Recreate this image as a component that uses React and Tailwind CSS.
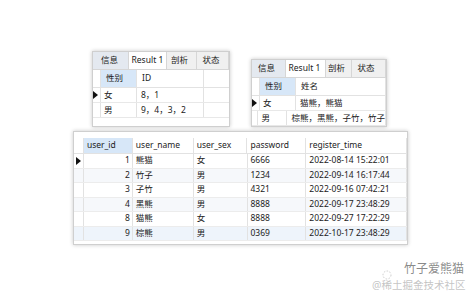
const FONT = { fontFamily: '"Noto Sans", "Noto Sans CJK SC", sans-serif' };

function Arrow() {
  return (
    <svg width="5" height="8" viewBox="0 0 5 8" className="block">
      <path d="M0 0 L5 4 L0 8 Z" fill="#111" />
    </svg>
  );
}

function Tabs({ tabs }) {
  return (
    <div className="flex h-[18px] bg-[#f0f0f0] border-b border-[#d6d6d6] shrink-0">
      {tabs.map((t) => (
        <div
          key={t.label}
          className={`flex items-center border-r border-[#d6d6d6] ${t.w} ${t.pl} ${
            t.active ? 'bg-white' : t.dark ? 'bg-[#e4e9f0]' : 'bg-[#f0f0f0]'
          }`}
        >
          {t.label}
        </div>
      ))}
    </div>
  );
}

function SmallGrid({ cols, header, rows, rowH, headH }) {
  return (
    <div className="flex flex-col">
      <div className={`flex ${headH} border-b border-[#e2e2e2]`}>
        <div className={`${cols[0]} border-r border-[#e2e2e2]`} />
        <div className={`${cols[1]} bg-[#d7e7f8] border-r border-[#e2e2e2] flex items-center pl-[5px]`}>{header[0]}</div>
        <div className={`${cols[2]} border-r border-[#e2e2e2] flex items-center pl-[5px]`}>{header[1]}</div>
      </div>
      {rows.map((r, i) => (
        <div key={i} className={`flex ${rowH} border-b border-[#e8e8e8]`}>
          <div className={`${cols[0]} border-r border-[#e2e2e2] flex items-center`}>{i === 0 && <Arrow />}</div>
          <div className={`${cols[1]} border-r border-[#e2e2e2] flex items-center pl-[3px]`}>{r[0]}</div>
          <div className={`${cols[2]} border-r border-[#e2e2e2] flex items-center pl-[4px] whitespace-nowrap`}>{r[1]}</div>
        </div>
      ))}
    </div>
  );
}

const USERS = [
  ['1', '熊猫', '女', '6666', '2022-08-14 15:22:01'],
  ['2', '竹子', '男', '1234', '2022-09-14 16:17:44'],
  ['3', '子竹', '男', '4321', '2022-09-16 07:42:21'],
  ['4', '黑熊', '男', '8888', '2022-09-17 23:48:29'],
  ['8', '猫熊', '女', '8888', '2022-09-27 17:22:29'],
  ['9', '棕熊', '男', '0369', '2022-10-17 23:48:29'],
];

const BIG_COLS = ['w-[49px]', 'w-[61px]', 'w-[54px]', 'w-[59px]', 'w-[101px]'];
const BIG_HEAD = ['user_id', 'user_name', 'user_sex', 'password', 'register_time'];

export default function App() {
  return (
    <div className="relative w-[474px] h-[299px] bg-white overflow-hidden text-[8.5px] text-[#222]" style={FONT}>
      {/* top result panels */}
      <div className="flex items-end pl-[92px] pt-[51px] gap-[21px] h-[127px]">
        <div className="w-[138px] h-[76px] bg-white border border-[#cfcfcf] shadow-[0_0_4px_rgba(0,0,0,0.22)] flex flex-col overflow-hidden">
          <Tabs
            tabs={[
              { label: '信息', w: 'w-[36px]', pl: 'pl-[8px]', dark: true },
              { label: 'Result 1', w: 'w-[39px]', pl: 'pl-[3px]', active: true },
              { label: '剖析', w: 'w-[31px]', pl: 'pl-[4px]' },
              { label: '状态', w: 'w-[32px]', pl: 'pl-[5px]' },
            ]}
          />
          <SmallGrid
            cols={['w-[8px]', 'w-[36px]', 'w-[67px]']}
            header={['性别', 'ID']}
            rows={[['女', '8，1'], ['男', '9，4，3，2']]}
            headH="h-[18px]"
            rowH="h-[15px]"
          />
        </div>

        <div className="w-[136px] h-[68px] bg-white border border-[#cfcfcf] shadow-[0_0_4px_rgba(0,0,0,0.22)] flex flex-col overflow-hidden">
          <Tabs
            tabs={[
              { label: '信息', w: 'w-[34px]', pl: 'pl-[6px]', dark: true },
              { label: 'Result 1', w: 'w-[41px]', pl: 'pl-[3px]', active: true },
              { label: '剖析', w: 'w-[27px]', pl: 'pl-[2px]' },
              { label: '状态', w: 'w-[34px]', pl: 'pl-[5px]' },
            ]}
          />
          <SmallGrid
            cols={['w-[8px]', 'w-[36px]', 'flex-1']}
            header={['性别', '姓名']}
            rows={[['女', '猫熊，熊猫'], ['男', '棕熊，黑熊，子竹，竹子']]}
            headH="h-[18px]"
            rowH="h-[15px]"
          />
        </div>
      </div>

      {/* user table */}
      <div className="pl-[73px] pt-[4px]">
        <div className="w-[335px] h-[114px] bg-white border border-[#cfcfcf] shadow-[0_0_4px_rgba(0,0,0,0.22)] pt-[6px] flex flex-col">
          <div className="flex h-[16px] border-b border-[#e2e2e2]">
            <div className="w-[10px] border-r border-[#e2e2e2]" />
            {BIG_HEAD.map((h, i) => (
              <div
                key={h}
                className={`${BIG_COLS[i]} flex items-center pl-[3px] border-r border-[#e2e2e2] ${i === 0 ? 'bg-[#d7e7f8]' : ''}`}
              >
                {h}
              </div>
            ))}
          </div>
          {USERS.map((u, r) => (
            <div
              key={u[0]}
              className={`flex h-[14.5px] border-b border-[#ececec] ${
                r === 5 ? 'bg-[#eef4fb]' : r % 2 === 1 ? 'bg-[#f6f8fb]' : 'bg-white'
              }`}
            >
              <div className="w-[10px] border-r border-[#e2e2e2] flex items-center pl-[2px]">{r === 0 && <Arrow />}</div>
              {u.map((v, i) => (
                <div
                  key={i}
                  className={`${BIG_COLS[i]} flex items-center border-r border-[#e2e2e2] whitespace-nowrap ${
                    i === 0 ? 'justify-end pr-[2px]' : 'pl-[3px]'
                  }`}
                >
                  {v}
                </div>
              ))}
            </div>
          ))}
        </div>
      </div>

      {/* watermark */}
      <div className="absolute left-[372px] top-[262px] w-[100px] h-[32px] pointer-events-none">
        <svg width="14" height="12" viewBox="0 0 14 12" className="absolute left-[8px] top-[6px] opacity-50">
          <circle cx="7" cy="7" r="4" fill="none" stroke="#999" strokeWidth="1" strokeDasharray="1.5 1.5" />
        </svg>
        <div className="absolute left-[32px] top-0 text-[12px] leading-[14px] text-[#555]/70 whitespace-nowrap">竹子爱熊猫</div>
        <div className="absolute left-0 top-[17px] text-[10.5px] leading-[13px] text-[#aaa]/70 whitespace-nowrap">@稀土掘金技术社区</div>
      </div>
    </div>
  );
}
